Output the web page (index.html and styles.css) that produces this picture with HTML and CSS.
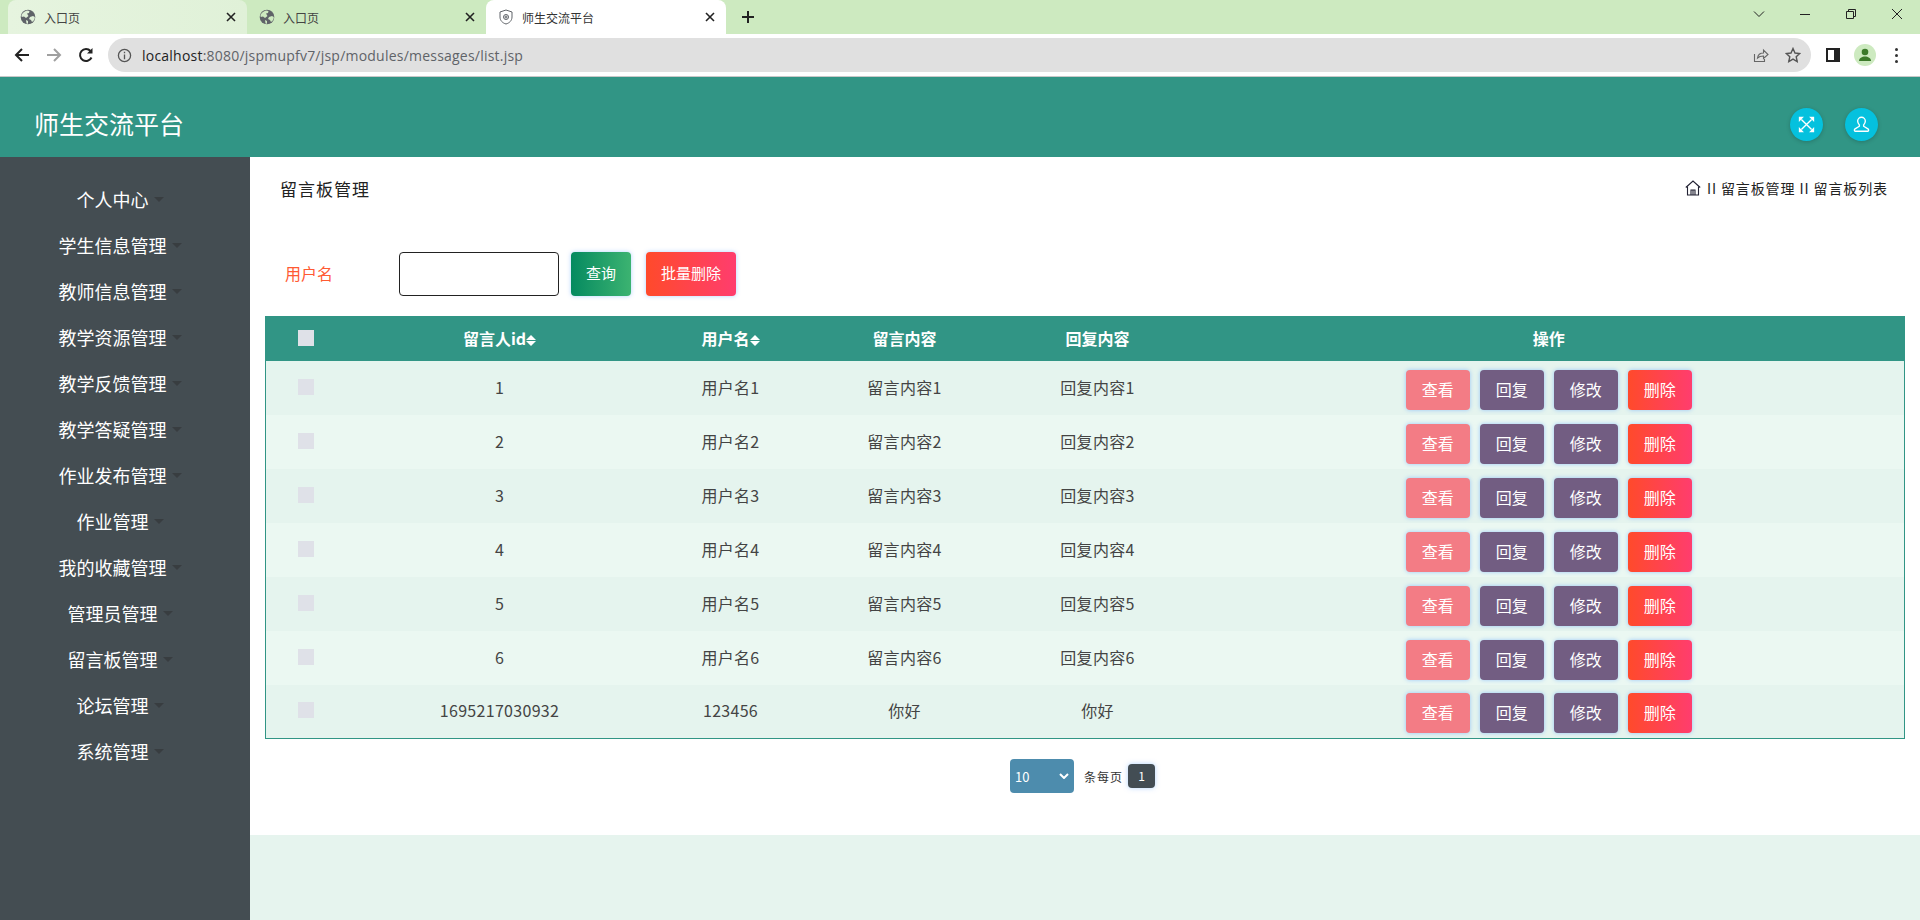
FILE: index.html
```html
<!DOCTYPE html>
<html lang="zh-CN">
<head>
    <meta charset="UTF-8">
    <title>师生交流平台</title>
    <link rel="stylesheet" href="styles.css">
</head>
<body>

    <!-- Browser tabs -->
    <div class="tab-strip">
        <div class="tab tab-hover">
            <svg class="tab-icon" viewBox="0 0 16 16"><circle cx="8" cy="8" r="7.300" fill="#5f6368"/><path class="land-hover" d="M1.500 6C2.500 4 4.500 2.200 7 1.600L9.500 2 9 4 7 4.500 8.500 7 6 9 4 7.500 1.700 8zM10 8l3-1 1.800 1c0 2-1 4-2.800 5l-1-2-2-1zM6 11l2 1v2.700l-1.500-.3z"/></svg>
            <span class="tab-title">入口页</span>
            <svg class="tab-close" viewBox="0 0 10 10"><path d="M1 1l8 8M9 1l-8 8"/></svg>
        </div>
        <div class="tab">
            <svg class="tab-icon" viewBox="0 0 16 16"><circle cx="8" cy="8" r="7.300" fill="#5f6368"/><path class="land" d="M1.500 6C2.500 4 4.500 2.200 7 1.600L9.500 2 9 4 7 4.500 8.500 7 6 9 4 7.500 1.700 8zM10 8l3-1 1.800 1c0 2-1 4-2.800 5l-1-2-2-1zM6 11l2 1v2.700l-1.500-.3z"/></svg>
            <span class="tab-title">入口页</span>
            <svg class="tab-close" viewBox="0 0 10 10"><path d="M1 1l8 8M9 1l-8 8"/></svg>
        </div>
        <div class="tab tab-active">
            <svg class="tab-icon" viewBox="0 0 16 16" fill="none" stroke="#5f6368"><path d="M8 1l6 2v5c0 3.500-2.500 6-6 7-3.500-1-6-3.500-6-7V3z"/><circle cx="8" cy="8" r="2.500"/><path d="M8 6.500v3M6.500 8h3"/></svg>
            <span class="tab-title">师生交流平台</span>
            <svg class="tab-close" viewBox="0 0 10 10"><path d="M1 1l8 8M9 1l-8 8"/></svg>
        </div>
        <svg class="new-tab" viewBox="0 0 14 14"><path d="M7 1v12M1 7h12" stroke="#222" stroke-width="2"/></svg>
        <div class="window-controls">
            <svg viewBox="0 0 12 12" fill="none" stroke="#222"><path d="M1 3.500l5 5 5-5"/></svg>
            <svg viewBox="0 0 12 12" fill="none" stroke="#222"><path d="M1 6.500h10"/></svg>
            <svg viewBox="0 0 12 12" fill="none" stroke="#222"><path d="M1.500 3.500h7v7h-7zM3.500 3.500v-2h7v7h-2"/></svg>
            <svg viewBox="0 0 12 12" fill="none" stroke="#222"><path d="M1 1l10 10M11 1L1 11"/></svg>
        </div>
    </div>

    <!-- Browser toolbar -->
    <div class="toolbar">
        <svg class="nav-icon" viewBox="0 0 16 16" fill="none" stroke="#222" stroke-width="2"><path d="M15 8H2M8 2L2 8l6 6"/></svg>
        <svg class="nav-icon" viewBox="0 0 16 16" fill="none" stroke="#a0a0a0" stroke-width="2"><path d="M1 8h13M8 2l6 6-6 6"/></svg>
        <svg class="nav-icon" viewBox="0 0 16 16" fill="none" stroke="#222" stroke-width="2"><path d="M13.500 10.500A6 6 0 1 1 12.500 4"/><path d="M14.500 1v5.500H9z" fill="#222" stroke="none"/></svg>
        <div class="omnibox">
            <svg class="info-icon" viewBox="0 0 16 16" fill="none" stroke="#555" stroke-width="1.400"><circle cx="8" cy="8" r="6.500"/><path d="M8 7v5M8 4v1.500"/></svg>
            <span class="url"><span class="url-host">localhost</span>:8080/jspmupfv7/jsp/modules/messages/list.jsp</span>
            <svg class="omni-icon" viewBox="0 0 16 16" fill="none" stroke="#666" stroke-width="1.100"><path d="M1.500 7v7.500h10V12"/><path d="M4.500 11c.5-3.500 3-5 6-5V3l4.500 4.500-4.500 4V9c-2.500 0-4.500.5-6 2z"/></svg>
            <svg class="omni-icon" viewBox="0 0 16 16" fill="none" stroke="#555" stroke-width="1.400"><path d="M8 1.500l2 4.500 4.700.5-3.500 3.200 1 4.800L8 12.100l-4.200 2.400 1-4.800L1.300 6.500 6 6z"/></svg>
        </div>
        <div class="panel-icon"></div>
        <div class="avatar">
            <svg viewBox="0 0 16 16" fill="#3c7a2a"><circle cx="8" cy="5" r="3.300"/><path d="M2 14c0-3 3-4.500 6-4.500s6 1.500 6 4.500z"/></svg>
        </div>
        <div class="menu-dots"><i></i><i></i><i></i></div>
    </div>

    <!-- Site header -->
    <header class="site-header">
        <div class="logo">师生交流平台</div>
        <div class="header-actions">
            <div class="round-btn">
                <svg viewBox="0 0 20 20" fill="#fff" stroke="#fff" stroke-width="1.600"><path d="M4 4l12 12M16 4L4 16"/><path d="M1 1h6L1 7zM19 1v6l-6-6zM19 19h-6l6-6zM1 19v-6l6 6z" stroke="none"/></svg>
            </div>
            <div class="round-btn">
                <svg viewBox="0 0 20 20" fill="none" stroke="#fff" stroke-width="1.600"><path d="M10 1.500a4.500 4.500 0 0 1 4.500 4.500c0 2-.8 3.500-2 4.500v1.500l5.500 3.500c.6.500.5 2.500-.5 2.500H2.500c-1 0-1.100-2-.5-2.500L7.500 12v-1.500C6.300 9.500 5.500 8 5.500 6A4.500 4.500 0 0 1 10 1.500z"/></svg>
            </div>
        </div>
    </header>

    <div class="layout">
        <!-- Sidebar -->
        <nav class="sidebar">
            <div class="menu-item">个人中心<span class="caret"></span></div>
            <div class="menu-item">学生信息管理<span class="caret"></span></div>
            <div class="menu-item">教师信息管理<span class="caret"></span></div>
            <div class="menu-item">教学资源管理<span class="caret"></span></div>
            <div class="menu-item">教学反馈管理<span class="caret"></span></div>
            <div class="menu-item">教学答疑管理<span class="caret"></span></div>
            <div class="menu-item">作业发布管理<span class="caret"></span></div>
            <div class="menu-item">作业管理<span class="caret"></span></div>
            <div class="menu-item">我的收藏管理<span class="caret"></span></div>
            <div class="menu-item">管理员管理<span class="caret"></span></div>
            <div class="menu-item">留言板管理<span class="caret"></span></div>
            <div class="menu-item">论坛管理<span class="caret"></span></div>
            <div class="menu-item">系统管理<span class="caret"></span></div>
        </nav>

        <main class="main">
            <div class="panel">
                <div class="page-head">
                    <div class="page-title">留言板管理</div>
                    <div class="breadcrumb">
                        <svg viewBox="0 0 16 16" fill="none" stroke="#223" stroke-width="1.100"><path d="M.8 7.500L8 1l7.200 6.500"/><path d="M2.500 6.500v8.500h11V6.500"/><path d="M6 15v-5h4v5M8 10v5"/></svg>
                        <span>II 留言板管理 II 留言板列表</span>
                    </div>
                </div>

                <div class="search-bar">
                    <label class="search-label">用户名</label>
                    <input class="search-input" type="text">
                    <div class="btn btn-query">查询</div>
                    <div class="btn btn-batch">批量删除</div>
                </div>

                <table class="data-table">
                    <colgroup>
                        <col class="col-check">
                        <col class="col-id">
                        <col class="col-user">
                        <col class="col-content">
                        <col class="col-reply">
                        <col>
                    </colgroup>
                    <thead>
                        <tr>
                            <th><span class="check"></span></th>
                            <th>留言人id<span class="sort"></span></th>
                            <th>用户名<span class="sort"></span></th>
                            <th>留言内容</th>
                            <th>回复内容</th>
                            <th>操作</th>
                        </tr>
                    </thead>
                    <tbody>
                        <tr>
                            <td><span class="check"></span></td>
                            <td>1</td><td>用户名1</td><td>留言内容1</td><td>回复内容1</td>
                            <td class="cell-actions"><div class="actions"><span class="act act-view">查看</span><span class="act act-plain">回复</span><span class="act act-plain">修改</span><span class="act act-del">删除</span></div></td>
                        </tr>
                        <tr>
                            <td><span class="check"></span></td>
                            <td>2</td><td>用户名2</td><td>留言内容2</td><td>回复内容2</td>
                            <td class="cell-actions"><div class="actions"><span class="act act-view">查看</span><span class="act act-plain">回复</span><span class="act act-plain">修改</span><span class="act act-del">删除</span></div></td>
                        </tr>
                        <tr>
                            <td><span class="check"></span></td>
                            <td>3</td><td>用户名3</td><td>留言内容3</td><td>回复内容3</td>
                            <td class="cell-actions"><div class="actions"><span class="act act-view">查看</span><span class="act act-plain">回复</span><span class="act act-plain">修改</span><span class="act act-del">删除</span></div></td>
                        </tr>
                        <tr>
                            <td><span class="check"></span></td>
                            <td>4</td><td>用户名4</td><td>留言内容4</td><td>回复内容4</td>
                            <td class="cell-actions"><div class="actions"><span class="act act-view">查看</span><span class="act act-plain">回复</span><span class="act act-plain">修改</span><span class="act act-del">删除</span></div></td>
                        </tr>
                        <tr>
                            <td><span class="check"></span></td>
                            <td>5</td><td>用户名5</td><td>留言内容5</td><td>回复内容5</td>
                            <td class="cell-actions"><div class="actions"><span class="act act-view">查看</span><span class="act act-plain">回复</span><span class="act act-plain">修改</span><span class="act act-del">删除</span></div></td>
                        </tr>
                        <tr>
                            <td><span class="check"></span></td>
                            <td>6</td><td>用户名6</td><td>留言内容6</td><td>回复内容6</td>
                            <td class="cell-actions"><div class="actions"><span class="act act-view">查看</span><span class="act act-plain">回复</span><span class="act act-plain">修改</span><span class="act act-del">删除</span></div></td>
                        </tr>
                        <tr>
                            <td><span class="check"></span></td>
                            <td>1695217030932</td><td>123456</td><td>你好</td><td>你好</td>
                            <td class="cell-actions"><div class="actions"><span class="act act-view">查看</span><span class="act act-plain">回复</span><span class="act act-plain">修改</span><span class="act act-del">删除</span></div></td>
                        </tr>
                    </tbody>
                </table>

                <div class="pager">
                    <div class="page-size">10<svg viewBox="0 0 10 6" fill="none" stroke="#fff" stroke-width="2"><path d="M1 1l4 4 4-4"/></svg></div>
                    <span class="page-text">条每页</span>
                    <span class="page-num">1</span>
                </div>
            </div>
        </main>
    </div>

</body>
</html>
```

FILE: styles.css
```css
/* Basic Reset */
* {
    margin: 0;
    padding: 0;
    box-sizing: border-box;
}

body {
    font-family: "Noto Sans CJK SC", "Noto Sans", sans-serif;
    height: 920px;
    overflow: hidden;
    background-color: #e6f4ee;
    color: #333;
}

/* Browser tabs */
.tab-strip {
    height: 34px;
    padding-left: 8px;
    display: flex;
    align-items: center;
    background-color: #cdeac0;
}

.tab {
    width: 239px;
    height: 34px;
    padding: 0 11px 0 12px;
    display: flex;
    align-items: center;
    border-radius: 8px 8px 0 0;
    font-size: 12px;
    color: #444;
}

.tab-hover {
    background: linear-gradient(to right, #e6f4df, #e0f1d8);
}

.tab-active {
    width: 240px;
    background-color: #fff;
    color: #333;
}

.tab-icon {
    width: 16px;
    height: 16px;
    margin-right: 8px;
}

.land {
    fill: #cdeac0;
}

.land-hover {
    fill: #e0f1d8;
}

.tab-title {
    flex: 1;
}

.tab-close {
    width: 10px;
    height: 10px;
    fill: none;
    stroke: #222;
    stroke-width: 1.6;
}

.new-tab {
    width: 14px;
    height: 14px;
    margin-left: 15px;
}

.window-controls {
    margin-left: auto;
    display: flex;
    gap: 34px;
    padding-right: 17px;
}

.window-controls svg {
    width: 12px;
    height: 12px;
    margin-top: -6px;
}

/* Browser toolbar */
.toolbar {
    height: 43px;
    padding: 0 0 0 14px;
    display: flex;
    align-items: center;
    background-color: #fff;
    border-bottom: 1px solid #c8c8c8;
}

.nav-icon {
    width: 16px;
    height: 16px;
    margin-right: 16px;
}

.omnibox {
    width: 1703px;
    height: 34px;
    margin-left: -2px;
    padding: 0 10px 0 9px;
    display: flex;
    align-items: center;
    border-radius: 17px;
    background-color: #e0e0e0;
}

.info-icon {
    width: 15px;
    height: 15px;
    margin-right: 10px;
}

.url {
    flex: 1;
    font-family: "Open Sans", sans-serif;
    font-size: 14px;
    letter-spacing: 0.22px;
    color: #5f6368;
}

.url-host {
    color: #222;
}

.omni-icon {
    width: 16px;
    height: 16px;
    margin-left: 16px;
}

.panel-icon {
    width: 14px;
    height: 14px;
    margin-left: 15px;
    background: linear-gradient(to right, #fff 60%, #222 60%);
    border: 2px solid #222;
}

.avatar {
    width: 22px;
    height: 22px;
    margin-left: 14px;
    padding: 3px;
    border-radius: 50%;
    background-color: #cdeac0;
}

.avatar svg {
    display: block;
}

.menu-dots {
    margin-left: 19px;
    display: flex;
    flex-direction: column;
    gap: 3px;
}

.menu-dots i {
    width: 3px;
    height: 3px;
    border-radius: 50%;
    background-color: #333;
}

/* Site header */
.site-header {
    height: 80px;
    padding: 0 42px 0 34px;
    display: flex;
    justify-content: space-between;
    align-items: center;
    background-color: #319585;
}

.logo {
    margin-top: 12px;
    font-size: 25px;
    color: #fff;
}

.header-actions {
    margin-top: 15px;
    display: flex;
    gap: 22px;
}

.round-btn {
    width: 33px;
    height: 33px;
    padding: 8px;
    border-radius: 50%;
    background-color: #05c1de;
    box-shadow: 0 1px 4px rgba(0, 0, 0, 0.2);
}

.round-btn svg {
    display: block;
}

/* Page layout */
.layout {
    display: flex;
    height: 763px;
}

.sidebar {
    width: 250px;
    padding-top: 19px;
    background-color: #444d52;
}

.menu-item {
    height: 46px;
    padding-right: 10px;
    display: flex;
    justify-content: center;
    align-items: center;
    font-size: 18px;
    color: #fff;
}

.caret {
    margin: 0 0 0 5px;
    border-top: 5px solid #383d40;
    border-left: 5px solid transparent;
    border-right: 5px solid transparent;
}

.main {
    flex: 1;
}

.panel {
    height: 678px;
    padding: 0 15px;
    background-color: #fff;
}

/* Heading row */
.page-head {
    height: 62px;
    padding: 0 17px 0 15px;
    display: flex;
    justify-content: space-between;
    align-items: center;
}

.page-title {
    font-size: 17px;
    letter-spacing: 1px;
    color: #222;
}

.breadcrumb {
    display: flex;
    align-items: center;
    gap: 6px;
    font-size: 14px;
    letter-spacing: 0.9px;
    color: #222;
}

.breadcrumb svg {
    width: 16px;
    height: 16px;
}

/* Search row */
.search-bar {
    height: 44px;
    margin: 33px 0 20px;
    display: flex;
    align-items: center;
}

.search-label {
    width: 134px;
    padding: 0 0 2px 20px;
    font-size: 16px;
    color: #ff5a33;
}

.search-input {
    width: 160px;
    height: 44px;
    border: 1px solid #222;
    border-radius: 4px;
    background-color: #fff;
}

.btn {
    height: 44px;
    line-height: 42px;
    text-align: center;
    font-size: 15px;
    color: #fff;
    border-radius: 4px;
    box-shadow: 0 0 4px rgba(100, 170, 255, 0.5);
}

.btn-query {
    width: 60px;
    margin-left: 12px;
    background: linear-gradient(to right, #058a60, #3cb371);
}

.btn-batch {
    width: 90px;
    margin-left: 15px;
    background: linear-gradient(to right, #ff4a2b, #ff3d6e);
}

/* Data table */
.data-table {
    width: 1640px;
    table-layout: fixed;
    border-collapse: collapse;
    border: 1px solid #319585;
    font-size: 16px;
    text-align: center;
}

.col-check {
    width: 80px;
}

.col-id {
    width: 308px;
}

.col-user {
    width: 154px;
}

.col-content {
    width: 194px;
}

.col-reply {
    width: 192px;
}

.data-table th {
    height: 44px;
    padding-bottom: 2px;
    background-color: #319585;
    color: #fff;
    font-weight: bold;
}

.data-table td {
    height: 54px;
    padding-bottom: 2px;
    letter-spacing: 0.3px;
    color: #444;
}

.data-table tbody tr:nth-child(odd) {
    background-color: #e5f4ee;
}

.data-table tbody tr:nth-child(even) {
    background-color: #ebf8f2;
}

.data-table .cell-actions {
    padding: 4px 0 0;
}

.check {
    display: block;
    width: 16px;
    height: 16px;
    margin: 0 auto;
    background-color: #dfe1e8;
}

.sort {
    display: inline-block;
    width: 10px;
    height: 11px;
    position: relative;
    vertical-align: -1px;
}

.sort::before,
.sort::after {
    content: "";
    position: absolute;
    left: 0;
    border-left: 5px solid transparent;
    border-right: 5px solid transparent;
}

.sort::before {
    top: 0;
    border-bottom: 5px solid #fff;
}

.sort::after {
    top: 6px;
    border-top: 5px solid #fff;
}

.actions {
    display: flex;
    justify-content: center;
    gap: 10px;
}

.act {
    width: 64px;
    height: 40px;
    line-height: 38px;
    font-size: 16px;
    letter-spacing: 0;
    color: #fff;
    border-radius: 4px;
    box-shadow: 0 0 4px rgba(100, 170, 255, 0.6);
}

.act-view {
    background-color: #f37c85;
}

.act-plain {
    background-color: #725d82;
}

.act-del {
    background: linear-gradient(to right, #ff4a2b, #ff3d6e);
}

/* Pagination */
.pager {
    margin: 20px 5px 0 0;
    display: flex;
    justify-content: center;
    align-items: center;
}

.page-size {
    width: 64px;
    height: 34px;
    padding: 0 5px;
    display: flex;
    justify-content: space-between;
    align-items: center;
    border-radius: 4px;
    font-size: 13px;
    color: #fff;
    background-color: #4d8cad;
}

.page-size svg {
    width: 10px;
    height: 6px;
}

.page-text {
    margin-left: 10px;
    font-size: 12px;
    letter-spacing: 1px;
    color: #333;
}

.page-num {
    width: 27px;
    height: 24px;
    line-height: 24px;
    margin-left: 5px;
    text-align: center;
    font-size: 12px;
    color: #fff;
    border-radius: 4px;
    background-color: #434d54;
    box-shadow: 0 0 5px rgba(100, 170, 255, 0.5);
}
```
